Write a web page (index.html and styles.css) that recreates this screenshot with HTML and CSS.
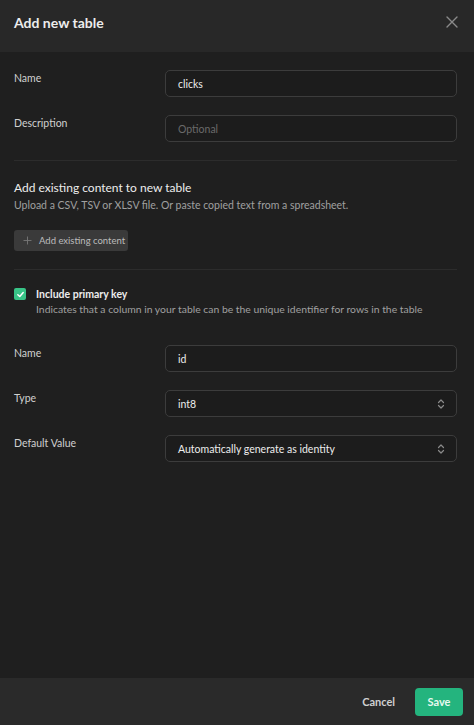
FILE: index.html
```html
<!DOCTYPE html>
<html>
<head>
<meta charset="utf-8">
<link rel="stylesheet" href="styles.css">
</head>
<body>
<div class="panel">
  <header class="head">
    <h1 class="title">Add new table</h1>
    <button class="close" aria-label="Close">
      <svg width="12" height="12" viewBox="0 0 12 12"><path d="M1 1L11 11M11 1L1 11" stroke="currentColor" stroke-width="1.4" stroke-linecap="round"/></svg>
    </button>
  </header>
  <main class="body">
    <div class="row">
      <label class="label">Name</label>
      <div class="field"><span class="value">clicks</span></div>
    </div>
    <div class="row">
      <label class="label">Description</label>
      <div class="field"><span class="placeholder">Optional</span></div>
    </div>
    <hr class="divider">
    <section class="import">
      <h2 class="section-title">Add existing content to new table</h2>
      <p class="section-sub">Upload a CSV, TSV or XLSV file. Or paste copied text from a spreadsheet.</p>
      <button class="btn-secondary">
        <svg width="9" height="9" viewBox="0 0 10 10"><path d="M5 1V9M1 5H9" stroke="currentColor" stroke-width="1" stroke-linecap="round"/></svg>
        Add existing content
      </button>
    </section>
    <hr class="divider">
    <div class="check-row">
      <span class="checkbox">
        <svg width="9" height="9" viewBox="0 0 10 10"><path d="M2 5.2L4.2 7.3L8 2.8" fill="none" stroke="#fff" stroke-width="1.6" stroke-linecap="round" stroke-linejoin="round"/></svg>
      </span>
      <div class="check-text">
        <div class="check-title">Include primary key</div>
        <div class="check-sub">Indicates that a column in your table can be the unique identifier for rows in the table</div>
      </div>
    </div>
    <div class="pk-fields">
      <div class="row">
        <label class="label">Name</label>
        <div class="field"><span class="value">id</span></div>
      </div>
      <div class="row">
        <label class="label">Type</label>
        <div class="field select"><span class="value">int8</span>
          <svg class="chev" width="8" height="12" viewBox="0 0 8 12"><path d="M1.5 4.5L4 2L6.5 4.5M1.5 7.5L4 10L6.5 7.5" fill="none" stroke="currentColor" stroke-width="1.2" stroke-linecap="round" stroke-linejoin="round"/></svg>
        </div>
      </div>
      <div class="row">
        <label class="label">Default Value</label>
        <div class="field select"><span class="value">Automatically generate as identity</span>
          <svg class="chev" width="8" height="12" viewBox="0 0 8 12"><path d="M1.5 4.5L4 2L6.5 4.5M1.5 7.5L4 10L6.5 7.5" fill="none" stroke="currentColor" stroke-width="1.2" stroke-linecap="round" stroke-linejoin="round"/></svg>
        </div>
      </div>
    </div>
  </main>
  <footer class="foot">
    <button class="btn-cancel">Cancel</button>
    <button class="btn-save">Save</button>
  </footer>
</div>
</body>
</html>
```
FILE: styles.css
```css
* { box-sizing: border-box; }
html, body { margin: 0; padding: 0; height: 100%; }
body {
  background: #1f1f1f;
  font-family: Lato, "Noto Sans", "Liberation Sans", sans-serif;
  color: #ededed;
}
.panel {
  display: flex;
  flex-direction: column;
  height: 725px;
}
.head {
  height: 52px;
  flex: none;
  background: #282828;
  display: flex;
  align-items: center;
  justify-content: space-between;
  padding: 0 16px 8px 14px;
}
.title {
  margin: 0;
  font-size: 14px;
  font-weight: 700;
  color: #ededed;
}
.close {
  background: none;
  border: 0;
  padding: 0;
  color: #8a8a8a;
  display: flex;
}
.body {
  flex: 1;
  padding: 18px 17px 0 14px;
  display: flex;
  flex-direction: column;
}
.row {
  display: flex;
  align-items: flex-start;
  margin-bottom: 18px;
}
.label {
  width: 151px;
  flex: none;
  font-size: 10.5px;
  color: #d0d0d0;
  padding-top: 1px;
  line-height: 14px;
}
.field {
  flex: 1;
  height: 27px;
  border: 1px solid #3c3c3c;
  border-radius: 5px;
  background: #1c1c1c;
  display: flex;
  align-items: center;
  padding: 0 11px 0 12px;
  font-size: 10.5px;
}
.value { color: #ededed; flex: 1; }
.placeholder { color: #6a6a6a; }
.chev { color: #8a8a8a; flex: none; }
.divider {
  border: 0;
  border-top: 1px solid #2c2c2c;
  margin: 0;
  height: 0;
}
.import {
  padding: 18px 0 18px;
}
.section-title {
  margin: 0;
  font-size: 12px;
  font-weight: 400;
  color: #ededed;
  line-height: 17px;
}
.section-sub {
  margin: 2px 0 0;
  font-size: 10.5px;
  color: #a0a0a0;
  line-height: 15px;
}
.btn-secondary {
  margin-top: 17px;
  height: 21px;
  width: 114px;
  white-space: nowrap;
  background: #3a3a3a;
  border: 0;
  border-radius: 3px;
  color: #bcbcbc;
  font-family: inherit;
  font-size: 9.5px;
  font-weight: 400;
  display: flex;
  align-items: center;
  gap: 7px;
  padding: 0 0 0 9px;
}
.btn-secondary svg { color: #777; }
.check-row {
  display: flex;
  gap: 10px;
  padding-top: 17px;
  margin-bottom: 28px;
}
.checkbox {
  width: 12px;
  height: 12px;
  border-radius: 2px;
  background: #38c487;
  display: flex;
  align-items: center;
  justify-content: center;
  flex: none;
  margin-top: 1px;
}
.check-title {
  font-size: 10.5px;
  font-weight: 700;
  color: #ededed;
  line-height: 14px;
}
.check-sub {
  margin-top: 1px;
  font-size: 10.4px;
  color: #a0a0a0;
  line-height: 15px;
}
.foot {
  height: 47px;
  flex: none;
  background: #2a2a2a;
  display: flex;
  align-items: center;
  justify-content: flex-end;
  gap: 20px;
  padding: 0 11px 0 0;
}
.btn-cancel {
  background: none;
  border: 0;
  color: #d0d0d0;
  font-family: inherit;
  font-size: 11px;
  font-weight: 700;
  padding: 0;
}
.btn-save {
  width: 48px;
  height: 28px;
  border: 0;
  border-radius: 4px;
  background: #24b47e;
  color: #e8f8ef;
  font-family: inherit;
  font-size: 11px;
  font-weight: 700;
}
```
